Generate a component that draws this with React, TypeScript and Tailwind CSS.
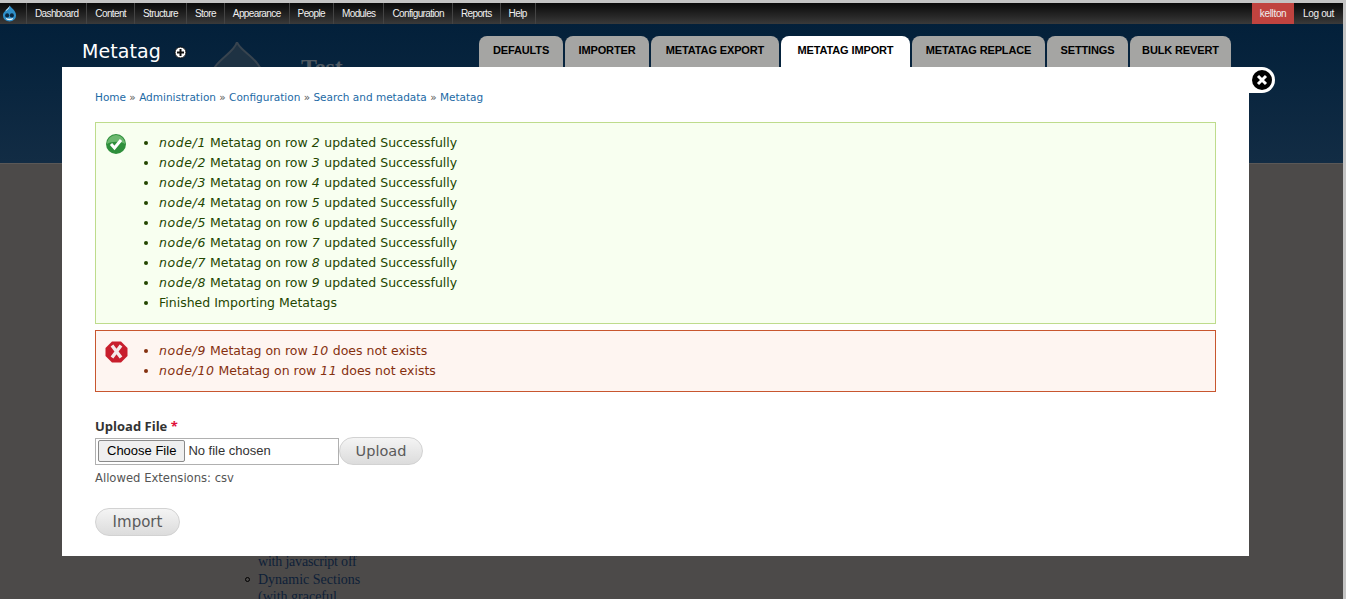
import React from 'react';

const toolbarLinks = ['Dashboard', 'Content', 'Structure', 'Store', 'Appearance', 'People', 'Modules', 'Configuration', 'Reports', 'Help'];
const tabs = [
  { label: 'DEFAULTS', width: 'w-[84px]' },
  { label: 'IMPORTER', width: 'w-[84px]' },
  { label: 'METATAG EXPORT', width: 'w-[128px]' },
  { label: 'METATAG IMPORT', width: 'w-[129px]' },
  { label: 'METATAG REPLACE', width: 'w-[133px]' },
  { label: 'SETTINGS', width: 'w-[81px]' },
  { label: 'BULK REVERT', width: 'w-[101px]' },
];
const crumbs = ['Home', 'Administration', 'Configuration', 'Search and metadata', 'Metatag'];
const updated = [1, 2, 3, 4, 5, 6, 7, 8];

const DrupalDrop = () => (
  <svg width="15" height="17" viewBox="0 0 16 18">
    <path d="M8.5 0.5c0.5 2.500 6.500 5 6.500 10.500a7 6.500 0 0 1-14 0c0-4 5-6 7.500-10.500z" fill="#2f8fc9" />
    <path d="M8.500 0.500c-1 2.500-4 4-5 6 2-1 4-2 5-6z" fill="#dfeefa" />
    <circle cx="5.500" cy="11" r="2.200" fill="#0a2740" />
    <circle cx="10.500" cy="11" r="2.200" fill="#0a2740" />
    <path d="M4.500 14.500c2 1.500 5 1.500 7 0-2 0.600-5 0.600-7 0z" fill="#fff" stroke="#fff" strokeWidth="0.800" />
  </svg>
);

const Badge = ({ kind }: { kind: 'ok' | 'error' }) =>
  kind === 'ok' ? (
    <svg className="shrink-0" width="22" height="22" viewBox="0 0 22 22">
      <circle cx="11" cy="11" r="10" fill="#2f8f3c" />
      <path d="M2 11a9 9 0 0 1 18 0c-4-3-14-3-18 0z" fill="#6cb86f" />
      <path d="M6 11l3.500 4 6.500-8" fill="none" stroke="#fff" strokeWidth="3" />
    </svg>
  ) : (
    <svg className="shrink-0" width="23" height="22" viewBox="0 0 23 22">
      <path d="M7 0.500h9l6.500 6.500v8l-6.500 6.500h-9l-6.500-6.500v-8z" fill="#c81e2d" />
      <path d="M7 4.500l9 12M16 4.500l-9 12" fill="none" stroke="#f4e9e9" strokeWidth="3.400" />
    </svg>
  );

const PillButton = ({ label, className }: { label: string; className: string }) => (
  <button className={`h-[28px] rounded-full border border-[#d2d2d2] bg-gradient-to-b from-[#f4f4f4] to-[#dcdcdc] text-[#5a5a5a] font-['DejaVu_Sans',sans-serif] ${className}`}>
    {label}
  </button>
);

export default function App() {
  return (
    <div className="relative flex h-[599px] w-[1346px] overflow-hidden bg-[#4c4a49] font-['DejaVu_Sans',sans-serif]">
      <div className="flex w-[1343px] flex-col">
        {/* admin toolbar */}
        <div className="h-[3px] shrink-0 bg-[#c4c4c4]" />
        <div className="flex h-[21px] shrink-0 items-center justify-between bg-gradient-to-b from-[#0a0a0a] to-[#3a3a3a] text-[10px] font-['Liberation_Sans',sans-serif] text-[#f0f0f0]">
          <div className="flex h-full items-center">
            <div className="flex w-[26px] justify-start pl-[2px]">
              <DrupalDrop />
            </div>
            {toolbarLinks.map((link) => (
              <a key={link} className="flex h-full items-center border-l border-[#444] px-2 tracking-[-0.62px] last:border-r">
                {link}
              </a>
            ))}
          </div>
          <div className="flex h-full items-center pr-[9px] tracking-[-0.35px]">
            <a className="flex h-full w-[42px] items-center justify-center bg-[#c0433f]">kellton</a>
            <a className="ml-[9px]">Log out</a>
          </div>
        </div>

        {/* page header */}
        <div className="relative flex h-[139px] shrink-0 items-start justify-between bg-gradient-to-b from-[#03203a] to-[#122c44] pl-[82px] pr-[112px] pt-[12px]">
          <svg className="absolute left-[208px] top-[18px]" width="58" height="40" viewBox="0 0 58 40">
            <path d="M29 0c2 9 26 18 26 36H3C3 20 26 12 29 0z" fill="#1e3243" stroke="#38444f" strokeWidth="2" />
          </svg>
          <span className="absolute left-[301px] top-[25px] font-['Liberation_Serif',serif] text-[24px] font-bold text-[#4f5962]">Test</span>
          <div className="relative flex items-center gap-[13px] pt-[3px]">
            <h1 className="text-[19px] leading-[24px] tracking-[0.1px] text-white">Metatag</h1>
            <svg className="mt-[3px]" width="13" height="13" viewBox="0 0 13 13">
              <circle cx="6.500" cy="6.500" r="5.500" fill="#fff" stroke="#111" strokeWidth="1" />
              <path d="M6.500 3v7M3 6.500h7" stroke="#111" strokeWidth="2" />
            </svg>
          </div>
          <div className="relative flex gap-[2px]">
            {tabs.map((tab) => (
              <a
                key={tab.label}
                className={`flex h-[31px] items-center justify-center rounded-t-[8px] pb-[2px] text-[11px] font-bold tracking-[-0.13px] font-['Liberation_Sans',sans-serif] text-black ${tab.width} ${
                  tab.label === 'METATAG IMPORT' ? 'bg-white' : 'bg-[#a5a5a3]'
                }`}
              >
                {tab.label}
              </a>
            ))}
          </div>
        </div>

        {/* page behind the overlay */}
        <div className="flex-1 border-t border-[#5a5857] pl-[245px] pt-[389px] font-['Liberation_Serif',serif] text-[14px] leading-[17px] text-[#0e1f38]">
          <div className="pl-[13px] tracking-[-0.2px]">with javascript off</div>
          <div className="flex gap-[8px] pt-px">
            <span className="mt-[6px] h-[5px] w-[5px] rounded-full border border-black" />
            <div>
              Dynamic Sections
              <br />
              (with graceful
            </div>
          </div>
        </div>
      </div>
      <div className="w-[3px] bg-[#c4c4c4]" />

      {/* overlay window */}
      <div className="absolute left-[62px] top-[67px] h-[489px] w-[1187px] bg-white px-[33px] pt-[23px] text-[12.500px] leading-[20px]">
        <a className="absolute left-[1180px] top-0 flex h-[26px] w-[33px] items-center justify-end rounded-r-full bg-white pr-[3px]">
          <svg width="20" height="20" viewBox="0 0 20 20">
            <circle cx="10" cy="10" r="10" fill="#000" />
            <path d="M6 6l8 8M14 6l-8 8" stroke="#fff" strokeWidth="3" />
          </svg>
        </a>

        <div className="text-[10.500px] leading-[14px] text-[#555]">
          {crumbs.map((crumb, i) => (
            <span key={crumb}>
              {i > 0 && ' » '}
              <a className="text-[#1d6aa5]">{crumb}</a>
            </span>
          ))}
        </div>

        <div className="mt-[18px] flex h-[202px] w-[1121px] border border-[#bedc8c] bg-[#f8fff0] pl-[9px] pt-[10px] text-[#234600]">
          <Badge kind="ok" />
          <ul className="ml-[16px] list-disc pl-[16px] marker:text-[#234600]">
            {updated.map((n) => (
              <li key={n}>
                <em className="tracking-[0.6px]">node/{n}</em> Metatag on row <em className="tracking-[0.6px]">{n + 1}</em> updated Successfully
              </li>
            ))}
            <li>Finished Importing Metatags</li>
          </ul>
        </div>

        <div className="mt-[6px] flex h-[62px] w-[1121px] border border-[#c8562f] bg-[#fef5f1] pl-[9px] pt-[10px] text-[#85300f]">
          <Badge kind="error" />
          <ul className="ml-[15px] list-disc pl-[16px]">
            <li>
              <em className="tracking-[0.6px]">node/9</em> Metatag on row <em className="tracking-[0.6px]">10</em> does not exists
            </li>
            <li>
              <em className="tracking-[0.6px]">node/10</em> Metatag on row <em className="tracking-[0.6px]">11</em> does not exists
            </li>
          </ul>
        </div>

        <label className="mt-[24px] block text-[13px] font-bold leading-[20px] text-[#333] font-['Open_Sans',sans-serif]">
          Upload File <span className="text-[#e0103a]">*</span>
        </label>
        <div className="mt-px flex items-center">
          <input
            type="file"
            className="h-[27px] w-[244px] border border-[#b0b0b0] pl-[2px] pt-px text-[13px] font-['Liberation_Sans',sans-serif] text-[#333] file:mr-[3px] file:h-[22px] file:cursor-default file:rounded-[2px] file:border file:border-[#8a8a8a] file:bg-[#efefef] file:px-[8px] file:text-[13px] file:text-black"
          />
          <PillButton label="Upload" className="w-[84px] text-[14.500px]" />
        </div>
        <p className="mt-[3px] text-[11.600px] leading-[20px] text-[#555]">Allowed Extensions: csv</p>
        <div className="mt-[20px]">
          <PillButton label="Import" className="w-[85px] text-[15px]" />
        </div>
      </div>
    </div>
  );
}
